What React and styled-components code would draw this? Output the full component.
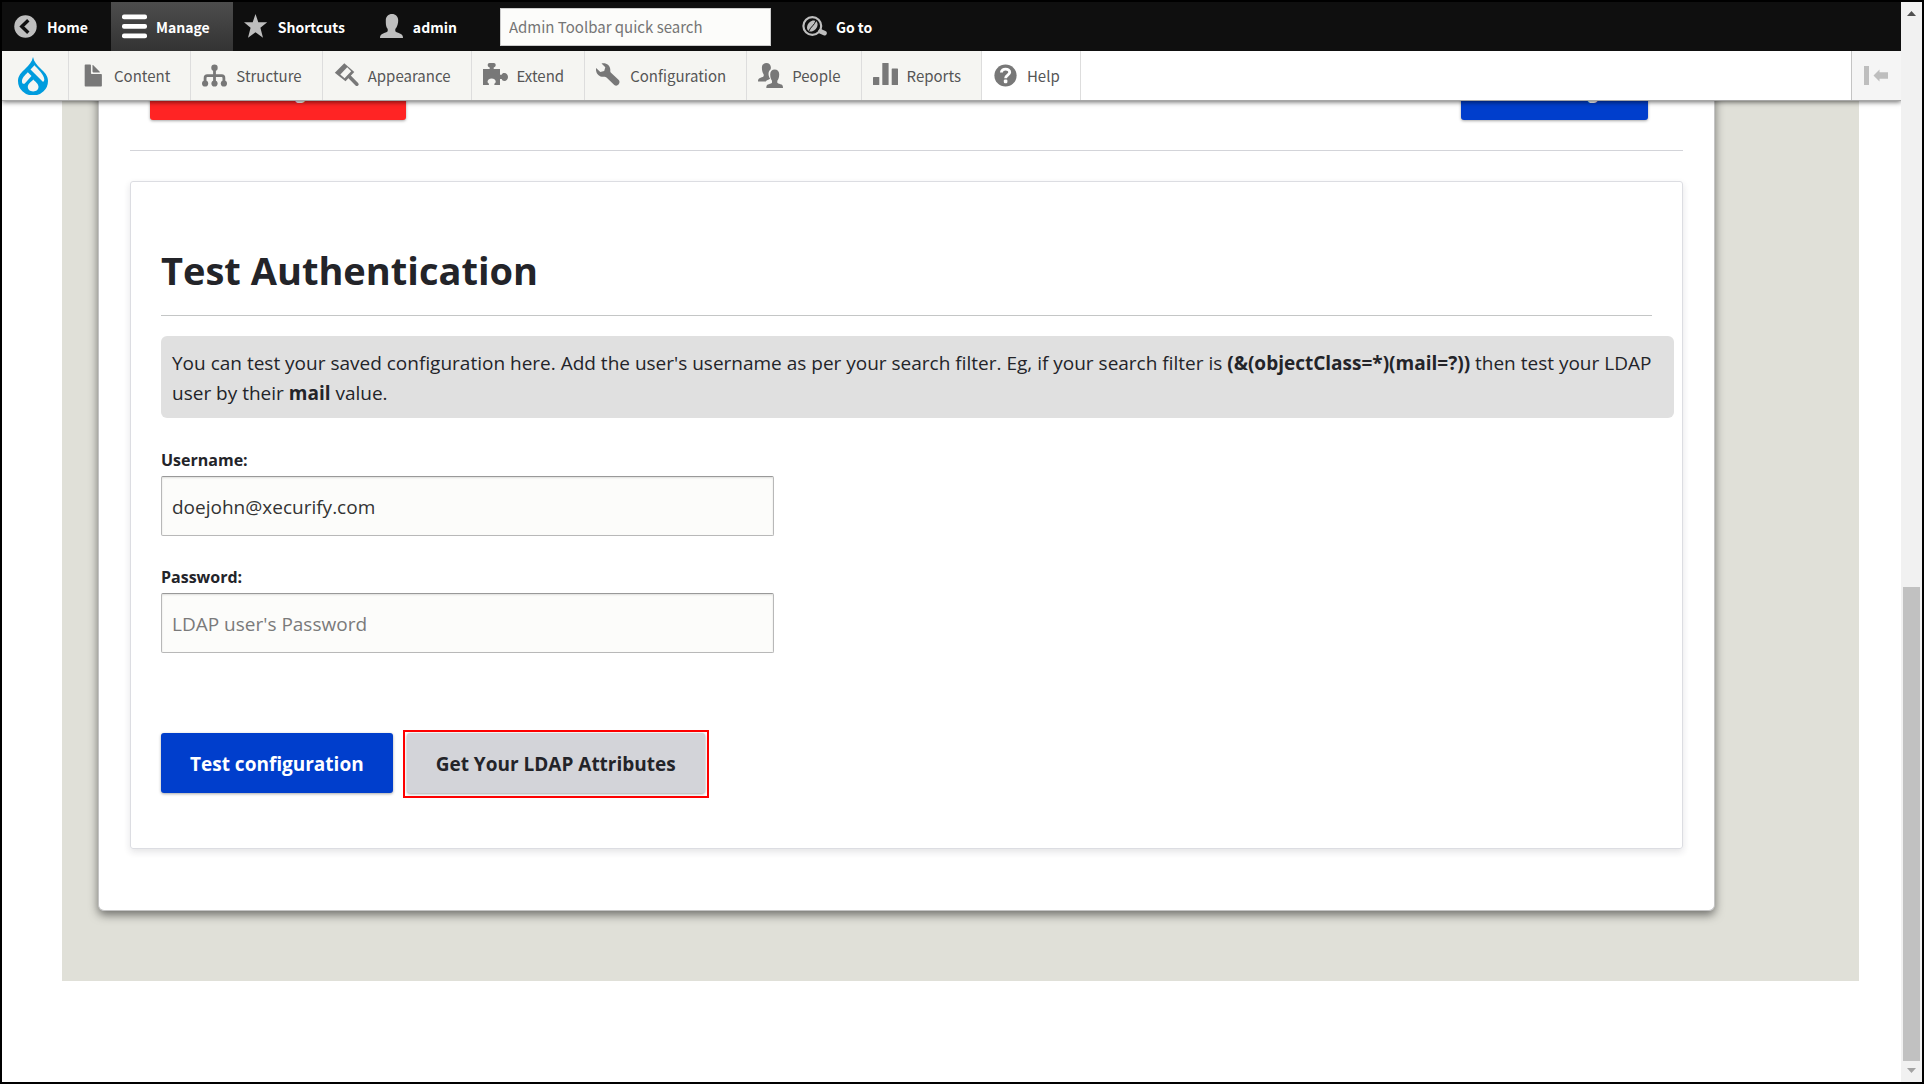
import React from "react";
import styled, { createGlobalStyle } from "styled-components";

const ui = '"Noto Sans CJK SC", "Noto Sans", sans-serif';
const body = '"Open Sans", "Noto Sans", sans-serif';

const GlobalStyle = createGlobalStyle`
  *, *::before, *::after { box-sizing: border-box; }
  body { margin: 0; background: #fff; color: #232429; font-family: ${body}; }
  button, input { font: inherit; }
`;

const Frame = styled.div`
  display: flex;
  height: 100vh;
  border: 2px solid #000;
  overflow: hidden;
`;

const Viewport = styled.div`
  position: relative;
  flex: 1;
  min-width: 0;
  overflow: hidden;
`;

const Toolbar = styled.header`
  position: absolute;
  inset: 0 0 auto 0;
  z-index: 2;
  font-family: ${ui};
  font-size: 15px;
  line-height: 24px;
  border-bottom: 1px solid #a6a6a6;
  box-shadow: 0 1px 5px rgba(0, 0, 0, 0.6);
`;

const Bar = styled.nav`
  display: flex;
  align-items: center;
  height: 49px;
  background: #0f0f0f;
`;

const Tab = styled.a`
  display: flex;
  align-items: center;
  gap: 9px;
  height: 100%;
  padding: 0 23px 0 11px;
  color: #fff;
  font-weight: 700;
  font-size: 14px;
  text-decoration: none;
  white-space: nowrap;
  background: ${(p) => (p.$active ? "linear-gradient(#4d4d4d, #333)" : "transparent")};
`;

const Search = styled.input`
  width: 271px;
  height: 38px;
  margin: 0 20px;
  padding: 0 8px;
  border: 1px solid #ccc;
  border-radius: 0;
  background: #fcfcfa;
  color: #333;
  outline: none;
  &::placeholder { color: #757575; opacity: 1; }
`;

const Tray = styled.nav`
  display: flex;
  height: 49px;
  background: #fff;
`;

const TrayLink = styled.a`
  display: flex;
  align-items: center;
  gap: 9px;
  padding: ${(p) => (p.$logo ? "0 20px 0 16px" : "0 20px 0 11px")};
  border-right: 1px solid #ddd;
  background: ${(p) => (p.$plain ? "#fff" : "#f5f5f2")};
  color: #565656;
  text-decoration: none;
  white-space: nowrap;
`;

const Orientation = styled.button`
  display: flex;
  align-items: center;
  justify-content: center;
  width: 50px;
  margin-left: auto;
  padding: 0;
  border: 0;
  border-left: 1px solid #c4c4c4;
  background: #f5f5f5;
`;

const Backdrop = styled.main`
  margin: 0 42px 0 60px;
  padding: 0 144px 70px 36px;
  background: #e0e0d8;
`;

const Card = styled.div`
  padding: 58px 31px 61px;
  border: 1px solid #c4c4c4;
  border-top: 0;
  border-radius: 0 0 6px 6px;
  background: #fff;
  box-shadow: 0 4px 10px rgba(0, 0, 0, 0.5);
`;

const TopActions = styled.div`
  display: flex;
  justify-content: space-between;
  padding: 0 35px 30px 20px;
  border-bottom: 1px solid #d3d4d9;
`;

const Button = styled.button`
  height: 60px;
  padding: 1px 29px 0;
  border: 0;
  border-radius: 3px;
  background: ${(p) => p.$bg};
  color: ${(p) => p.$fg || "#fff"};
  font-size: 19px;
  font-weight: 700;
  line-height: 24px;
  white-space: nowrap;
  box-shadow: 0 1px 3px rgba(0, 0, 0, 0.35);
`;

const Panel = styled.section`
  margin-top: 30px;
  padding: 60px 30px 50px;
  border: 1px solid #dcdde2;
  border-radius: 3px;
  box-shadow: 0 3px 7px rgba(34, 35, 48, 0.12);
`;

const Title = styled.h1`
  margin: 0;
  padding-bottom: 17px;
  border-bottom: 1px solid #c4c6c6;
  font-size: 38px;
  font-weight: 700;
  line-height: 56px;
`;

const Info = styled.p`
  width: calc(100% + 22px);
  margin: 20px 0 28px;
  padding: 12px 11px 10px;
  border-radius: 6px;
  background: #e0e0e0;
  font-size: 19px;
  line-height: 30px;
`;

const Field = styled.div`
  display: flex;
  flex-direction: column;
  gap: 2px;
  margin-bottom: 27px;
`;

const Label = styled.label`
  font-size: 16px;
  font-weight: 700;
  line-height: 28px;
`;

const TextBox = styled.input`
  width: 613px;
  max-width: 100%;
  height: 60px;
  padding: 2px 10px 0;
  border: 1px solid #b8b8b8;
  border-top-color: #999;
  border-radius: 2px;
  background: #fcfcfa;
  box-shadow: inset 0 1px 2px rgba(0, 0, 0, 0.12);
  color: #333;
  font-size: 19px;
  outline: none;
  &::placeholder { color: #7a7a7a; opacity: 1; }
`;

const Actions = styled.div`
  display: flex;
  align-items: baseline;
  gap: 10px;
  padding-top: 50px;
`;

const Highlight = styled.div`
  display: flex;
  padding: 1px 2px 3px;
  border: 2px solid #f00;
`;

const Scrollbar = styled.div`
  display: flex;
  flex-direction: column;
  justify-content: space-between;
  align-items: center;
  width: 21px;
  padding: 9px 2px;
  background: #f1f1f1;
`;

const Thumb = styled.div`
  width: 17px;
  height: 474px;
  margin: auto 0 7px;
  background: #c1c1c1;
`;

const Svg = styled.svg`
  flex: none;
  display: block;
`;

const Icon = ({ color = "#787878", children }) => (
  <Svg width="25" height="25" viewBox="0 0 25 25" fill={color} stroke="none" aria-hidden="true">
    {children}
  </Svg>
);

const light = "#bebebe";

const icons = {
  home: (
    <Icon color={light}>
      <circle cx="12.5" cy="12.5" r="11.2" />
      <path d="M15.3 6.2 8.8 12.5l6.5 6.3" fill="none" stroke="#0f0f0f" strokeWidth="3.4" />
    </Icon>
  ),
  manage: (
    <Icon color="#fff">
      <rect y=".6" width="25" height="4.7" rx="2" />
      <rect y="10.1" width="25" height="4.7" rx="2" />
      <rect y="19.6" width="25" height="4.7" rx="2" />
    </Icon>
  ),
  star: (
    <Icon color={light}>
      <path d="M11.5 0l2.8 8.2H23.2l-6.8 5.6 2.6 9.9-7.5-5.4-7.5 5.4 2.6-9.9L-.2 8.2h8.9z" />
    </Icon>
  ),
  person: (
    <Icon color={light}>
      <path d="M13 0c3.6 0 6.2 2.6 6.2 6.5 0 3.2-.9 6.3-2.9 8.5v2.2c1.5 1.5 4.2 1.8 6 3 1.2.8 1.7 2 1.7 3.8H1c0-1.8.5-3 1.7-3.8 1.8-1.2 4.5-1.5 6-3V15C6.7 12.8 6.800 9.700 6.800 6.500 6.800 2.600 9.400 0 13 0z" />
    </Icon>
  ),
  goto: (
    <Icon color={light}>
      <circle cx="10.3" cy="12" r="8.9" fill="none" stroke={light} strokeWidth="2.2" />
      <ellipse cx="10.3" cy="12" rx="4.6" ry="6.2" transform="rotate(40 10.3 12)" />
      <path d="M13.8 6.8c-1.2 4.4-5 5.6-7 10.4" fill="none" stroke="#0f0f0f" strokeWidth="1" />
      <path d="M18.5 17.400l4 1.800" fill="none" stroke={light} strokeWidth="4.6" strokeLinecap="round" />
    </Icon>
  ),
  content: (
    <Icon>
      <path
        transform="scale(1.5625)"
        d="M12.502 7h-5c-.276 0-.502-.225-.502-.5v-5c0-.275-.225-.5-.5-.5h-3c-.275 0-.5.225-.5.5v13.029c0 .275.225.5.5.5h10c.275 0 .5-.225.5-.5v-7.029c0-.275-.225-.5-.498-.5zM8.502 6h4c.275 0 .34-.159.146-.354l-4.293-4.292c-.195-.195-.353-.129-.353.146v4c0 .275.225.5.5.5z"
      />
    </Icon>
  ),
  structure: (
    <Icon>
      <circle cx="12.5" cy="4.7" r="3.2" />
      <circle cx="3.1" cy="20.5" r="3.1" />
      <circle cx="12.5" cy="20.5" r="3.1" />
      <circle cx="21.9" cy="20.5" r="3.1" />
      <path d="M12.5 5v15M3.1 20v-5c0-1.5.7-2.3 2.2-2.3h14.4c1.5 0 2.2.8 2.2 2.3v5" fill="none" stroke="#787878" strokeWidth="2.8" />
    </Icon>
  ),
  appearance: (
    <Icon>
      <path d="M.8 9.8 10.3.2l10 8.9-8.8 9.2z" />
      <path d="M13.2 4.300l4 3.900-6.600 7-4.300-3.800z" fill="#f5f5f2" />
      <path d="M15.2 13.5l7.600 7.700" fill="none" stroke="#787878" strokeWidth="3.6" strokeLinecap="round" />
    </Icon>
  ),
  extend: (
    <Icon>
      <path d="M0 6h6.700V4.600C5.200 4.100 4.700 3 4.700 2c0-1.300.8-2 1.800-2h4.400c1 0 1.800.7 1.800 2 0 1-.5 2.100-2 2.600V6H17v5.800h1.700c.3-1.300 1.200-1.900 2.600-1.900 2.200 0 3.700 1.700 3.700 4s-1.500 4-3.700 4c-1.400 0-2.300-.6-2.600-1.900H17v6h-5.500c-.4-.9-.1-1.500.6-2 .9-.6.9-2.600-.4-3.600-1.600-1.300-4.500-1.300-6.100 0-1.300 1-1.300 3-.4 3.600.7.5 1 1.100.6 2H0z" />
    </Icon>
  ),
  configuration: (
    <Icon>
      <path d="M5.500.4C10-.8 14.700 2.400 14.300 7.500c-.1 1 0 1.600.7 2.300l7.500 7c2.900 2.700-1 7.900-4.200 5.200l-7.800-7.500c-.8-.7-1.500-.8-2.500-.7C3 14.200-.8 10 .1 5l4.200 4 3.900-.9 1.100-3.800z" />
    </Icon>
  ),
  people: (
    <Icon>
      <path d="M8.400 0c2.600 0 4.500 1.800 4.500 4.600l-.2 1.700c-1.900 1.500-2.500 3.400-2 6.200.2 1.300.7 2.200 1.400 3.200-1.600 1-3.400 1.300-4.300 2.700H0c0-1.600.4-2.600 1.500-3.200 1.400-.8 3-.8 4.200-1.900V11.400C4.400 9.800 3.900 7.300 3.900 4.600 3.900 1.800 5.800 0 8.400 0z" />
      <path d="M16.700 6.600c2.600 0 4.500 1.800 4.500 4.600 0 2.600-.6 5-1.900 6.600v1.900c1.200 1.100 2.800 1.200 4.200 1.900 1.100.6 1.500 1.800 1.500 3.400H8.300c0-1.600.4-2.800 1.500-3.400 1.400-.7 3-.8 4.200-1.900v-1.900c-1.200-1.600-1.800-4-1.800-6.600 0-2.800 1.900-4.600 4.500-4.600z" />
    </Icon>
  ),
  reports: (
    <Icon>
      <rect y="14" width="6.3" height="8" rx=".6" />
      <rect x="9.3" width="6.3" height="22" rx=".6" />
      <rect x="18.7" y="5.5" width="6.3" height="16.5" rx=".6" />
    </Icon>
  ),
  help: (
    <Icon>
      <circle cx="12.5" cy="12.5" r="11.1" />
      <path d="M8.4 9.6c0-4.6 8.3-4.6 8.3-.3 0 2.900-4.100 2.900-4.100 6" fill="none" stroke="#fff" strokeWidth="2.9" />
      <rect x="10.8" y="16.6" width="3.6" height="3.6" rx="1.2" fill="#fff" />
    </Icon>
  ),
};

const Drop = () => (
  <Svg width="30" height="38" viewBox="0 0 30 38" aria-hidden="true">
    <path d="M15 0C16 5 19 8 22.5 11.5 26.5 15.3 30 18.5 30 24a15 14.5 0 0 1-30 0C0 18.5 3.5 15.3 7.5 11.5 11 8 14 5 15 0z" fill="#009cde" />
    <path d="M12.500 12.500 16.500 8.300c2 2.700 9.500 8.700 9.800 14 .1 1-.4 1.900-1.200 2.600z" fill="#f5f5f2" />
    <path d="M9.8 15.200l3.700 3.700-6.700 7.500c-1 1.100-2.700.1-2.800-1.500-.4-3.900 2.800-6.600 5.800-9.700z" fill="#f5f5f2" />
    <path d="M15.300 22.500c2.200 2.500 5.200 4.300 5.200 7.300 0 2.800-2.200 4.700-5.300 4.700s-5.400-1.900-5.400-4.700c0-3 3.400-4.900 5.500-7.300z" fill="#f5f5f2" />
  </Svg>
);

const trayItems = [
  ["Content", "content"],
  ["Structure", "structure"],
  ["Appearance", "appearance"],
  ["Extend", "extend"],
  ["Configuration", "configuration"],
  ["People", "people"],
  ["Reports", "reports"],
  ["Help", "help"],
];

export default function App() {
  return (
    <Frame>
      <GlobalStyle />
      <Viewport>
        <Toolbar>
          <Bar aria-label="Administration">
            <Tab href="#home">{icons.home}Home</Tab>
            <Tab href="#manage" $active>{icons.manage}Manage</Tab>
            <Tab href="#shortcuts">{icons.star}Shortcuts</Tab>
            <Tab href="#admin">{icons.person}admin</Tab>
            <Search type="text" aria-label="Admin Toolbar quick search" placeholder="Admin Toolbar quick search" />
            <Tab href="#goto">{icons.goto}Go to</Tab>
          </Bar>
          <Tray aria-label="Manage">
            <TrayLink href="#drupal" $logo aria-label="Drupal"><Drop /></TrayLink>
            {trayItems.map(([name, icon]) => (
              <TrayLink key={name} href={`#${icon}`} $plain={icon === "help"}>
                {icons[icon]}
                {name}
              </TrayLink>
            ))}
            <Orientation type="button" aria-label="Vertical orientation">
              <Icon color={light}>
                <path d="M0 3h5v19H0zM9.5 12.500l6-6v2.800H24v6.500h-8.500v2.700z" />
              </Icon>
            </Orientation>
          </Tray>
        </Toolbar>

        <Backdrop>
          <Card>
            <TopActions>
              <Button type="button" $bg="#ff2424">Delete Configuration</Button>
              <Button type="button" $bg="#003ecc">Save Changes</Button>
            </TopActions>
            <Panel>
              <Title>Test Authentication</Title>
              <Info>
                You can test your saved configuration here. Add the user's username as per your search filter. Eg, if
                your search filter is <b>(&amp;(objectClass=*)(mail=?))</b> then test your LDAP user by their{" "}
                <b>mail</b> value.
              </Info>
              <Field>
                <Label htmlFor="username">Username:</Label>
                <TextBox id="username" type="text" defaultValue="doejohn@xecurify.com" />
              </Field>
              <Field>
                <Label htmlFor="password">Password:</Label>
                <TextBox id="password" type="password" placeholder="LDAP user's Password" />
              </Field>
              <Actions>
                <Button type="button" $bg="#003ecc">Test configuration</Button>
                <Highlight>
                  <Button type="button" $bg="#d3d4d9" $fg="#232429">Get Your LDAP Attributes</Button>
                </Highlight>
              </Actions>
            </Panel>
          </Card>
        </Backdrop>
      </Viewport>
      <Scrollbar aria-hidden="true">
        <Svg width="9" height="5" viewBox="0 0 9 5"><path d="M0 5 4.5 0 9 5z" fill="#505050" /></Svg>
        <Thumb />
        <Svg width="9" height="5" viewBox="0 0 9 5"><path d="M0 0h9L4.5 5z" fill="#a3a3a3" /></Svg>
      </Scrollbar>
    </Frame>
  );
}
